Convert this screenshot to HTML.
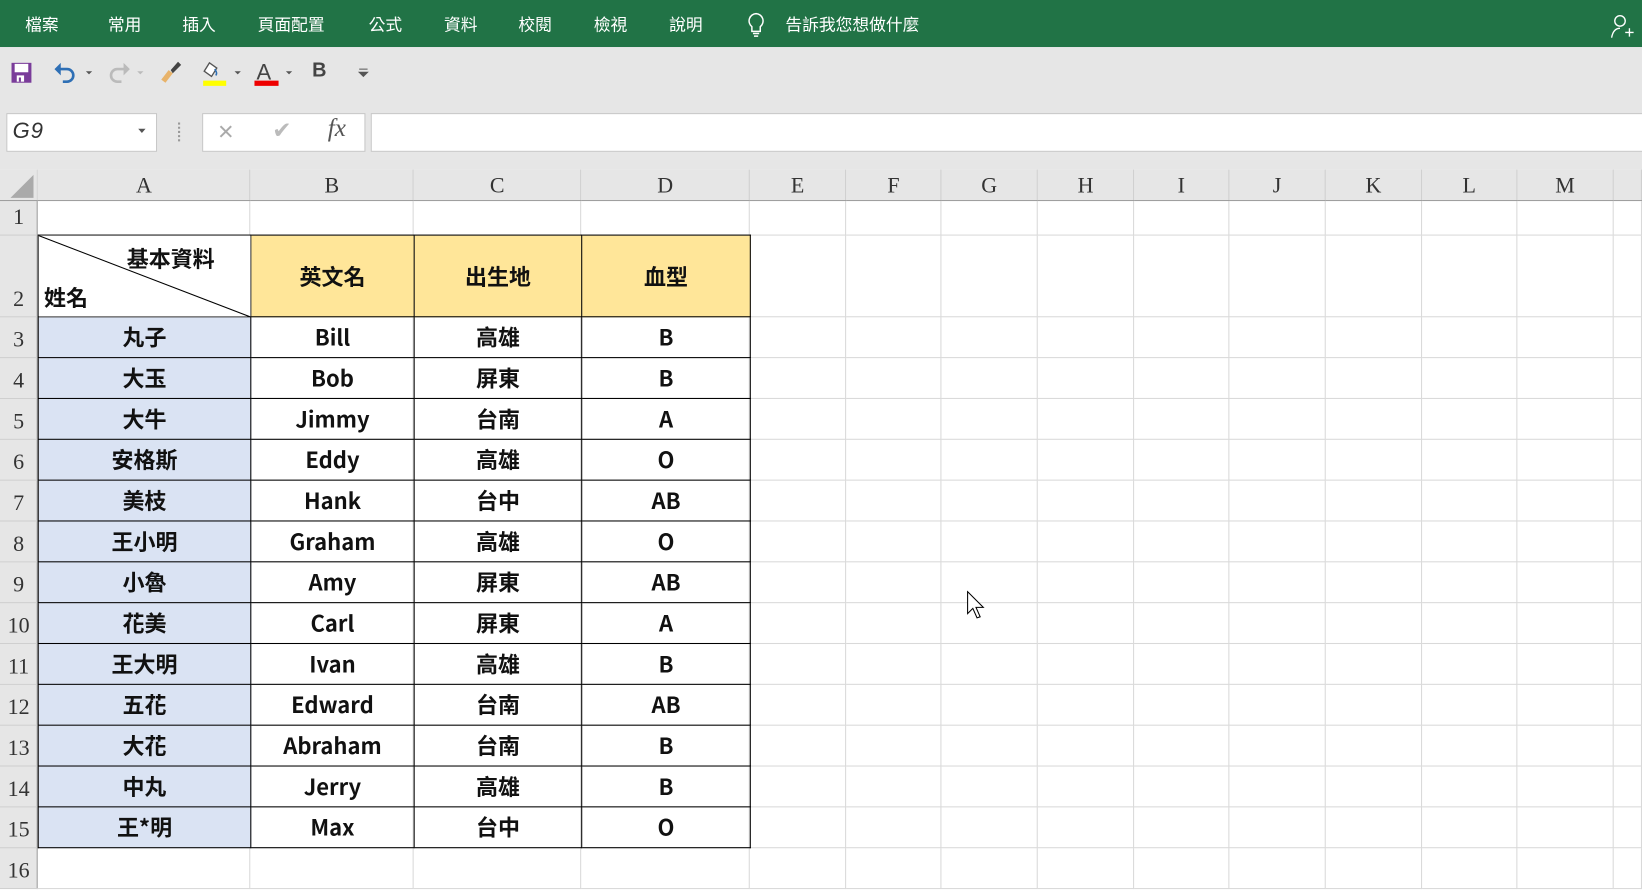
<!DOCTYPE html>
<html><head><meta charset="utf-8">
<style>
*{margin:0;padding:0;box-sizing:border-box}
html,body{width:1642px;height:893px;overflow:hidden;background:#fff}
#w{position:absolute;left:0;top:0;width:1568px;height:853px;transform:scale(1.04719);transform-origin:0 0;font-family:"Liberation Sans","Noto Sans CJK TC",sans-serif}
.green{position:absolute;left:0;top:0;width:1568px;height:45px;background:#217346}
.tab{position:absolute;top:11px;color:#fff;font-size:16px;font-family:"Noto Sans CJK TC",sans-serif;line-height:22px}
.tb{position:absolute;left:0;top:45px;width:1568px;height:117px;background:#e6e6e6}
.box{position:absolute;background:#fff;border:1px solid #c6c6c6}
table{border-collapse:collapse;table-layout:fixed;position:absolute}
#grid{left:0;top:162px}
#grid td{border-right:1px solid #d9d9d9;border-bottom:1px solid #d9d9d9;padding:0}
#grid tr.h td{background:#e6e6e6;font-family:"Liberation Serif",serif;font-size:21px;color:#333;text-align:center;border-bottom:1px solid #9e9e9e;border-right:1px solid #cfcfcf;padding-top:2px}
#grid td.rh{background:#e6e6e6;font-family:"Liberation Serif",serif;font-size:21px;color:#333;text-align:center;vertical-align:bottom;border-right:1px solid #9e9e9e;border-bottom:1px solid #cfcfcf;line-height:24px;padding-bottom:5px}
#data{left:36px;top:224px}
#data td{border:1px solid #000;text-align:center;font-family:"Noto Sans CJK TC",sans-serif;font-weight:bold;font-size:21px;color:#111;padding:0;line-height:24px}
#data td.a{background:#dae3f3}
#data tr.hd td{background:#ffe699}
</style></head><body><div id="w">
<div class="green"></div>
<div class="tab" style="left:24px">檔案</div>
<div class="tab" style="left:103px">常用</div>
<div class="tab" style="left:174px">插入</div>
<div class="tab" style="left:246px">頁面配置</div>
<div class="tab" style="left:352px">公式</div>
<div class="tab" style="left:424px">資料</div>
<div class="tab" style="left:495px">校閱</div>
<div class="tab" style="left:567px">檢視</div>
<div class="tab" style="left:639px">說明</div>
<svg style="position:absolute;left:712px;top:11px" width="20" height="26" viewBox="0 0 20 26"><path d="M10 2a7 7 0 0 0-4 12.5V19h8v-4.5A7 7 0 0 0 10 2z M7 21h6 M8 23.5h4" fill="none" stroke="#fff" stroke-width="1.4"/></svg>
<div class="tab" style="left:750px">告訴我您想做什麼</div>
<svg style="position:absolute;left:1536px;top:12px" width="26" height="26" viewBox="0 0 26 26"><circle cx="11" cy="8" r="5" fill="none" stroke="#fff" stroke-width="1.3"/><path d="M3 24c1-6 4-9 8-9 M16 19h8 M20 15v8" fill="none" stroke="#fff" stroke-width="1.3"/></svg>
<div class="tb"></div>
<svg style="position:absolute;left:10px;top:59px" width="22" height="22" viewBox="0 0 22 22"><rect x="1" y="1" width="19" height="19" fill="#7a3c9a"/><rect x="4" y="2" width="13" height="8" fill="#fff"/><rect x="6" y="13" width="7" height="6" fill="#fff"/><rect x="8" y="15" width="2" height="4" fill="#7a3c9a"/></svg>
<svg style="position:absolute;left:50px;top:58px" width="40" height="24" viewBox="0 0 40 24"><path d="M5 8h9a6 6 0 0 1 0 12h-4" fill="none" stroke="#2e6fb5" stroke-width="2.5"/><path d="M2 8l6-6v12z" fill="#2e6fb5"/><path d="M32 10l3 3 3-3z" fill="#555"/></svg>
<svg style="position:absolute;left:100px;top:58px" width="40" height="24" viewBox="0 0 40 24"><path d="M21 8h-9a6 6 0 0 0 0 12h4" fill="none" stroke="#bbb" stroke-width="2.5"/><path d="M24 8l-6-6v12z" fill="#bbb"/><path d="M31 10l3 3 3-3z" fill="#bbb"/></svg>
<svg style="position:absolute;left:150px;top:58px" width="26" height="24" viewBox="0 0 26 24"><path d="M4 18l7-9 4 3-7 9z" fill="#e8b36a"/><path d="M13 9l7-8 3 3-8 8z" fill="#444"/></svg>
<svg style="position:absolute;left:192px;top:56px" width="42" height="28" viewBox="0 0 42 28"><path d="M8 4l-5 8 7 5 5-8z" fill="#fff" stroke="#555" stroke-width="1.3"/><path d="M13 10q3 4 1 6" fill="none" stroke="#2e6fb5" stroke-width="1.5"/><rect x="2" y="21" width="22" height="5" fill="#ffff00"/><path d="M32 12l3 3 3-3z" fill="#555"/></svg>
<svg style="position:absolute;left:242px;top:56px" width="42" height="28" viewBox="0 0 42 28"><text x="3" y="20" font-family="Liberation Sans" font-size="21" fill="#444">A</text><rect x="1" y="21" width="23" height="5" fill="#e00"/><path d="M31 12l3 3 3-3z" fill="#555"/></svg>
<div style="position:absolute;left:298px;top:57px;font-weight:bold;font-size:19px;color:#444">B</div>
<svg style="position:absolute;left:341px;top:63px" width="12" height="12" viewBox="0 0 12 12"><path d="M2 3h8 M2 6l4 4 4-4z" stroke="#555" fill="#555"/></svg>
<div class="box" style="left:6px;top:108px;width:144px;height:37px"></div>
<div style="position:absolute;left:12px;top:114px;font-size:21px;font-family:'Liberation Sans',sans-serif;color:#333;font-style:italic;letter-spacing:1px">G9</div>
<svg style="position:absolute;left:131px;top:121px" width="10" height="8"><path d="M1 2h7l-3.5 4z" fill="#555"/></svg>
<div style="position:absolute;left:170px;top:117px;width:3px;height:18px;border-left:2px dotted #999"></div>
<div class="box" style="left:193px;top:108px;width:156px;height:37px"></div>
<div style="position:absolute;left:208px;top:110px;font-size:26px;color:#aaa">×</div>
<div style="position:absolute;left:260px;top:112px;font-size:22px;color:#bbb">✔</div>
<div style="position:absolute;left:313px;top:110px;font-size:24px;color:#555;font-style:italic;font-family:'Liberation Serif',serif">fx</div>
<div class="box" style="left:354px;top:108px;width:1220px;height:37px"></div>
<table id="grid">
<colgroup><col style="width:36px"><col style="width:203px"><col style="width:156px"><col style="width:160px"><col style="width:161px"><col style="width:92px"><col style="width:91px"><col style="width:92px"><col style="width:92px"><col style="width:91px"><col style="width:92px"><col style="width:92px"><col style="width:91px"><col style="width:92px"><col style="width:27px"></colgroup>
<tr class="h" style="height:29px"><td style="position:relative"><svg style="position:absolute;left:8px;top:4px" width="26" height="24"><path d="M24 1v22H2z" fill="#aaa"/></svg></td><td>A</td><td>B</td><td>C</td><td>D</td><td>E</td><td>F</td><td>G</td><td>H</td><td>I</td><td>J</td><td>K</td><td>L</td><td>M</td><td></td></tr>
<tr style="height:33px"><td class="rh">1</td><td></td><td></td><td></td><td></td><td></td><td></td><td></td><td></td><td></td><td></td><td></td><td></td><td></td><td></td></tr>
<tr style="height:78px"><td class="rh">2</td><td></td><td></td><td></td><td></td><td></td><td></td><td></td><td></td><td></td><td></td><td></td><td></td><td></td><td></td></tr>
<tr style="height:39px"><td class="rh">3</td><td></td><td></td><td></td><td></td><td></td><td></td><td></td><td></td><td></td><td></td><td></td><td></td><td></td><td></td></tr>
<tr style="height:39px"><td class="rh">4</td><td></td><td></td><td></td><td></td><td></td><td></td><td></td><td></td><td></td><td></td><td></td><td></td><td></td><td></td></tr>
<tr style="height:39px"><td class="rh">5</td><td></td><td></td><td></td><td></td><td></td><td></td><td></td><td></td><td></td><td></td><td></td><td></td><td></td><td></td></tr>
<tr style="height:39px"><td class="rh">6</td><td></td><td></td><td></td><td></td><td></td><td></td><td></td><td></td><td></td><td></td><td></td><td></td><td></td><td></td></tr>
<tr style="height:39px"><td class="rh">7</td><td></td><td></td><td></td><td></td><td></td><td></td><td></td><td></td><td></td><td></td><td></td><td></td><td></td><td></td></tr>
<tr style="height:39px"><td class="rh">8</td><td></td><td></td><td></td><td></td><td></td><td></td><td></td><td></td><td></td><td></td><td></td><td></td><td></td><td></td></tr>
<tr style="height:39px"><td class="rh">9</td><td></td><td></td><td></td><td></td><td></td><td></td><td></td><td></td><td></td><td></td><td></td><td></td><td></td><td></td></tr>
<tr style="height:39px"><td class="rh">10</td><td></td><td></td><td></td><td></td><td></td><td></td><td></td><td></td><td></td><td></td><td></td><td></td><td></td><td></td></tr>
<tr style="height:39px"><td class="rh">11</td><td></td><td></td><td></td><td></td><td></td><td></td><td></td><td></td><td></td><td></td><td></td><td></td><td></td><td></td></tr>
<tr style="height:39px"><td class="rh">12</td><td></td><td></td><td></td><td></td><td></td><td></td><td></td><td></td><td></td><td></td><td></td><td></td><td></td><td></td></tr>
<tr style="height:39px"><td class="rh">13</td><td></td><td></td><td></td><td></td><td></td><td></td><td></td><td></td><td></td><td></td><td></td><td></td><td></td><td></td></tr>
<tr style="height:39px"><td class="rh">14</td><td></td><td></td><td></td><td></td><td></td><td></td><td></td><td></td><td></td><td></td><td></td><td></td><td></td><td></td></tr>
<tr style="height:39px"><td class="rh">15</td><td></td><td></td><td></td><td></td><td></td><td></td><td></td><td></td><td></td><td></td><td></td><td></td><td></td><td></td></tr>
<tr style="height:39px"><td class="rh">16</td><td></td><td></td><td></td><td></td><td></td><td></td><td></td><td></td><td></td><td></td><td></td><td></td><td></td><td></td></tr>
</table>
<table id="data">
<colgroup><col style="width:203px"><col style="width:156px"><col style="width:160px"><col style="width:161px"></colgroup>
<tr class="hd" style="height:78px"><td style="background:#fff;position:relative"><svg style="position:absolute;left:0;top:0" width="203" height="78"><line x1="0" y1="0" x2="203" y2="78" stroke="#000" stroke-width="1"/></svg><span style="position:absolute;right:34px;top:10px">基本資料</span><span style="position:absolute;left:5px;bottom:6px">姓名</span></td><td>英文名</td><td>出生地</td><td>血型</td></tr>
<tr style="height:39px"><td class="a">丸子</td><td>Bill</td><td>高雄</td><td>B</td></tr>
<tr style="height:39px"><td class="a">大玉</td><td>Bob</td><td>屏東</td><td>B</td></tr>
<tr style="height:39px"><td class="a">大牛</td><td>Jimmy</td><td>台南</td><td>A</td></tr>
<tr style="height:39px"><td class="a">安格斯</td><td>Eddy</td><td>高雄</td><td>O</td></tr>
<tr style="height:39px"><td class="a">美枝</td><td>Hank</td><td>台中</td><td>AB</td></tr>
<tr style="height:39px"><td class="a">王小明</td><td>Graham</td><td>高雄</td><td>O</td></tr>
<tr style="height:39px"><td class="a">小魯</td><td>Amy</td><td>屏東</td><td>AB</td></tr>
<tr style="height:39px"><td class="a">花美</td><td>Carl</td><td>屏東</td><td>A</td></tr>
<tr style="height:39px"><td class="a">王大明</td><td>Ivan</td><td>高雄</td><td>B</td></tr>
<tr style="height:39px"><td class="a">五花</td><td>Edward</td><td>台南</td><td>AB</td></tr>
<tr style="height:39px"><td class="a">大花</td><td>Abraham</td><td>台南</td><td>B</td></tr>
<tr style="height:39px"><td class="a">中丸</td><td>Jerry</td><td>高雄</td><td>B</td></tr>
<tr style="height:39px"><td class="a">王*明</td><td>Max</td><td>台中</td><td>O</td></tr>
</table>
<svg style="position:absolute;left:922px;top:564px" width="20" height="28" viewBox="0 0 20 28"><path d="M2 1v21l5-5 4 9 3-1-4-9h7z" fill="#fff" stroke="#000" stroke-width="1"/></svg>
</div></body></html>
